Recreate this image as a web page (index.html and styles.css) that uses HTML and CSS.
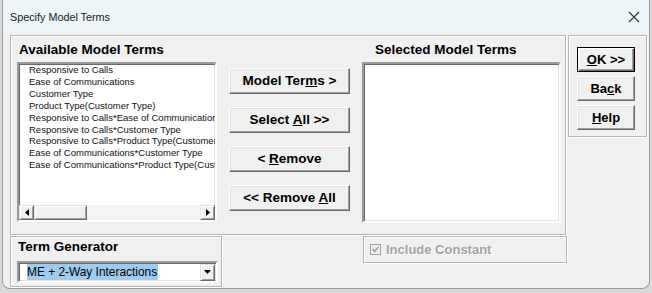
FILE: index.html
```html
<!DOCTYPE html>
<html>
<head>
<meta charset="utf-8">
<link rel="stylesheet" href="styles.css">
</head>
<body>
<div class="window">
  <div class="titlebar">
    <span class="title">Specify Model Terms</span>
    <svg class="close" width="12" height="12" viewBox="0 0 12 12"><path d="M1 1 L11 11 M11 1 L1 11" stroke="#333" stroke-width="1.1" fill="none"/></svg>
  </div>
  <div class="client">
    <div class="top-row">
      <div class="frame main-frame">
        <div class="col col-left">
          <div class="heading">Available Model Terms</div>
          <div class="listbox">
            <div class="items">
              <div>Responsive to Calls</div>
              <div>Ease of Communications</div>
              <div>Customer Type</div>
              <div>Product Type(Customer Type)</div>
              <div>Responsive to Calls*Ease of Communications</div>
              <div>Responsive to Calls*Customer Type</div>
              <div>Responsive to Calls*Product Type(Customer Type)</div>
              <div>Ease of Communications*Customer Type</div>
              <div>Ease of Communications*Product Type(Customer Type)</div>
            </div>
            <div class="hscroll">
              <div class="sbtn"><svg width="4" height="7" viewBox="0 0 4 7"><path d="M4 0 L0 3.5 L4 7 Z" fill="#000"/></svg></div>
              <div class="thumb"></div>
              <div class="track"></div>
              <div class="sbtn"><svg width="4" height="7" viewBox="0 0 4 7"><path d="M0 0 L4 3.5 L0 7 Z" fill="#000"/></svg></div>
            </div>
          </div>
        </div>
        <div class="col col-mid">
          <div class="btn wide"><span>Model Ter<u>m</u>s &gt;</span></div>
          <div class="btn wide"><span>Select <u>A</u>ll &gt;&gt;</span></div>
          <div class="btn wide"><span>&lt; <u>R</u>emove</span></div>
          <div class="btn wide"><span>&lt;&lt; Remove <u>A</u>ll</span></div>
        </div>
        <div class="col col-right">
          <div class="heading heading-right">Selected Model Terms</div>
          <div class="listbox listbox-right"></div>
        </div>
      </div>
      <div class="frame side-frame">
        <div class="btn small default"><span><u>O</u>K &gt;&gt;</span></div>
        <div class="btn small"><span>Ba<u>c</u>k</span></div>
        <div class="btn small"><span><u>H</u>elp</span></div>
      </div>
    </div>
    <div class="bottom-row">
      <div class="frame term-frame">
        <div class="heading">Term Generator</div>
        <div class="combo">
          <span class="combo-text">ME + 2-Way Interactions</span>
          <div class="combo-btn"><svg width="7" height="4" viewBox="0 0 7 4"><path d="M0 0 L7 0 L3.5 4 Z" fill="#000"/></svg></div>
        </div>
      </div>
      <div class="frame const-frame">
        <svg class="check" width="11" height="11" viewBox="0 0 11 11"><rect x="0.5" y="0.5" width="10" height="10" fill="#f0f0f0" stroke="#a0a0a0"/><path d="M2.5 5 L4.5 7.5 L8.5 3" stroke="#a0a0a0" stroke-width="1.6" fill="none"/></svg>
        <span class="const-label">Include Constant</span>
      </div>
    </div>
  </div>
</div>
</body>
</html>
```

FILE: styles.css
```css
* { box-sizing: border-box; }
html, body { margin: 0; padding: 0; }
body {
  width: 652px;
  height: 293px;
  overflow: hidden;
  background: #d9d9d9;
  font-family: "Liberation Sans", Arial, sans-serif;
  color: #000;
}
.window {
  margin-left: 2px;
  width: 648px;
  height: 289px;
  border: 1px solid #9c9c9c;
  border-top: none;
  border-radius: 0 0 8px 8px;
  background: #f0f0f0;
  overflow: hidden;
}
.titlebar {
  height: 33px;
  background: #eef5f8;
  display: flex;
  align-items: center;
  justify-content: space-between;
  padding: 0 9px 0 7px;
}
.title {
  font-size: 10.8px;
  color: #1a1a1a;
}
.close { display: block; }
.client {
  padding: 2px 0 0 7px;
}
.top-row {
  display: flex;
  align-items: flex-start;
  gap: 2px;
}
.frame {
  border: 1px solid #b5b5b5;
  box-shadow: inset 1px 1px 0 #fff, 1px 1px 0 #fff;
}
.main-frame {
  width: 556px;
  height: 200px;
  display: flex;
  padding: 6px 4px 0 6px;
  gap: 12px;
}
.col-left { width: 200px; }
.col-mid {
  width: 121px;
  padding-top: 26px;
  display: flex;
  flex-direction: column;
  gap: 13px;
}
.col-right { width: 199px; }
.heading {
  font-size: 13.5px;
  font-weight: bold;
  line-height: 16px;
  white-space: nowrap;
  padding-left: 2px;
}
.heading-right { padding-left: 13px; }
.listbox {
  margin-top: 4px;
  height: 160px;
  background: #fff;
  border: 2px solid;
  border-color: #9a9a9a #fff #fff #9a9a9a;
  box-shadow: inset 1px 1px 0 #6a6a6a, inset -1px -1px 0 #e3e3e3;
  display: flex;
  flex-direction: column;
  overflow: hidden;
}
.listbox-right { height: 161px; }
.items {
  flex: 1;
  padding-left: 10px;
  font-size: 9.5px;
  line-height: 11.9px;
  white-space: nowrap;
  overflow: hidden;
  color: #111;
}
.hscroll {
  height: 15px;
  display: flex;
  background: #f4f4f4;
}
.sbtn, .thumb, .combo-btn {
  background: #f0f0f0;
  border: 1px solid;
  border-color: #e3e3e3 #696969 #696969 #e3e3e3;
  box-shadow: inset 1px 1px 0 #fff, inset -1px -1px 0 #a0a0a0;
}
.sbtn {
  width: 15px;
  display: flex;
  align-items: center;
  justify-content: center;
}
.thumb { width: 53px; }
.track { flex: 1; }
.btn {
  background: #f0f0f0;
  border: 1px solid;
  border-color: #fff #696969 #696969 #fff;
  box-shadow: inset -1px -1px 0 #a0a0a0, inset 1px 1px 0 #e3e3e3;
  font-weight: bold;
  font-size: 13.5px;
  display: flex;
  align-items: center;
  justify-content: center;
  white-space: nowrap;
}
.btn span { line-height: 16px; }
.btn.wide { height: 26px; }
.side-frame {
  width: 79px;
  height: 102px;
  padding: 11px 0 0 8px;
  display: flex;
  flex-direction: column;
  gap: 4px;
}
.btn.small {
  width: 58px;
  height: 25px;
  font-size: 13px;
}
.btn.default {
  border: 1px solid #000;
  box-shadow: inset 1px 1px 0 #fff, inset -1px -1px 0 #696969, inset -2px -2px 0 #a0a0a0;
}
.bottom-row {
  display: flex;
  align-items: flex-start;
  margin-top: 1px;
  gap: 141px;
}
.term-frame {
  width: 212px;
  height: 51px;
  padding: 2px 0 0 6px;
}
.term-frame .heading { padding-left: 1px; }
.combo {
  margin-top: 6px;
  width: 201px;
  height: 22px;
  background: #fff;
  border: 2px solid;
  border-color: #9a9a9a #fff #fff #9a9a9a;
  box-shadow: inset 1px 1px 0 #6a6a6a, inset -1px -1px 0 #e3e3e3;
  display: flex;
  align-items: center;
  justify-content: space-between;
  padding: 0 1px 0 8px;
}
.combo-text {
  font-size: 11.9px;
  line-height: 16px;
  background: #9ecbf0;
  white-space: nowrap;
  padding-right: 1px;
}
.combo-btn {
  width: 15px;
  height: 17px;
  display: flex;
  align-items: center;
  justify-content: center;
}
.const-frame {
  width: 204px;
  height: 27px;
  display: flex;
  align-items: center;
  padding-left: 6px;
  gap: 5px;
}
.check { display: block; }
.const-label {
  font-size: 13px;
  font-weight: bold;
  color: #a3a3a3;
  text-shadow: 1px 1px 0 #fff;
  white-space: nowrap;
}
```
